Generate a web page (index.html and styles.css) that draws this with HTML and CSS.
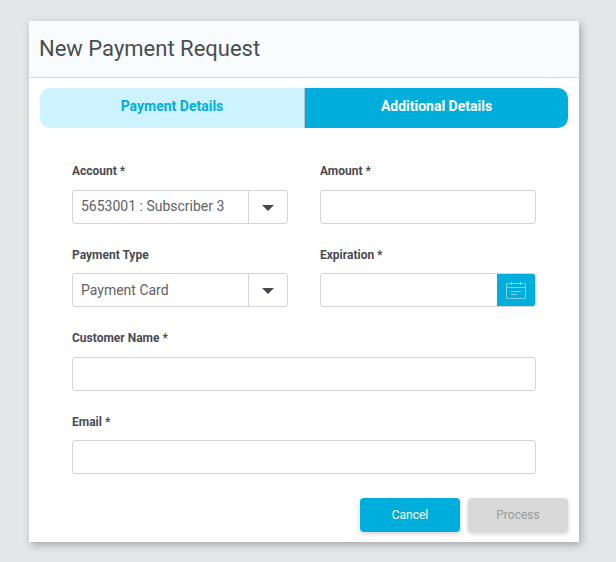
FILE: index.html
```html
<!DOCTYPE html>
<html lang="en">
<head>
    <meta charset="UTF-8">
    <title>New Payment Request</title>
    <link rel="stylesheet" href="styles.css">
</head>
<body>
    <div class="modal">
        <div class="modal-header">
            <h1>New Payment Request</h1>
        </div>
        <div class="tabs">
            <div class="tab tab-active">Payment Details</div>
            <div class="tab tab-next">Additional Details</div>
        </div>
        <form class="payment-form">
            <div class="field">
                <label>Account *</label>
                <div class="control">
                    <span class="control-value">5653001 : Subscriber 3</span>
                    <span class="select-arrow"><i class="caret"></i></span>
                </div>
            </div>
            <div class="field">
                <label>Amount *</label>
                <div class="control"></div>
            </div>
            <div class="field">
                <label>Payment Type</label>
                <div class="control">
                    <span class="control-value">Payment Card</span>
                    <span class="select-arrow"><i class="caret"></i></span>
                </div>
            </div>
            <div class="field">
                <label>Expiration *</label>
                <div class="control">
                    <span class="control-value"></span>
                    <span class="date-button">
                        <svg width="20" height="18" viewBox="0 0 20 18" fill="none" stroke="#7fd0ea" stroke-width="1">
                            <rect x="0.5" y="2.5" width="19" height="15" rx="0.5"/>
                            <path d="M0.5 6.5H19.5"/>
                            <path d="M5.5 0.5V4M14.5 0.5V4"/>
                            <path d="M5 10.5H15"/>
                            <path d="M5 13.5H11"/>
                        </svg>
                    </span>
                </div>
            </div>
            <div class="field field-wide">
                <label>Customer Name *</label>
                <div class="control"></div>
            </div>
            <div class="field field-wide">
                <label>Email *</label>
                <div class="control"></div>
            </div>
        </form>
        <div class="modal-footer">
            <button class="button button-primary" type="button">Cancel</button>
            <button class="button button-disabled" type="button" disabled>Process</button>
        </div>
    </div>
</body>
</html>
```

FILE: styles.css
```css
* {
    margin: 0;
    padding: 0;
    box-sizing: border-box;
    font-family: Roboto, 'Liberation Sans', sans-serif;
}

body {
    background: #e5e6e8;
    padding: 21px 37px 20px 29px;
    overflow: hidden;
}

.modal {
    width: 550px;
    height: 521px;
    background: white;
    box-shadow: 2px 3px 8px rgba(0, 0, 0, 0.28);
}

.modal-header {
    height: 57px;
    background: #f8fcff;
    border-bottom: 1px solid #d3d6da;
    padding: 14px 10px 0;
}

h1 {
    font-size: 22px;
    font-weight: 400;
    line-height: 27px;
    color: #4a4d50;
}

.tabs {
    display: flex;
    margin: 10px 11px 0;
    height: 40px;
}

.tab {
    display: flex;
    justify-content: center;
    align-items: center;
    padding-bottom: 4px;
    font-size: 14px;
    font-weight: 700;
}

.tab-active {
    width: 265px;
    background: #ccf3ff;
    color: #00aedb;
    border-right: 1px solid #b9c4c8;
    border-radius: 10px 0 0 10px;
}

.tab-next {
    flex: 1;
    background: #00aedb;
    color: white;
    border-radius: 0 10px 10px 0;
}

.payment-form {
    display: grid;
    grid-template-columns: 216px 216px;
    column-gap: 32px;
    row-gap: 22px;
    padding: 34.25px 43px 0;
}

.field-wide {
    grid-column: 1 / 3;
}

label {
    display: block;
    height: 27.5px;
    padding-top: 2px;
    font-size: 12px;
    font-weight: 700;
    line-height: 14px;
    color: #484c52;
}

.control {
    display: flex;
    height: 34px;
    background: white;
    border: 1px solid #d3d5d8;
    border-radius: 3px;
}

.control-value {
    flex: 1;
    padding: 0.5px 0 0 8px;
    font-size: 14px;
    line-height: 31px;
    color: #5f6266;
}

.select-arrow {
    width: 39px;
    display: flex;
    justify-content: center;
    align-items: center;
    border-left: 1px solid #d3d5d8;
}

.caret {
    margin-top: 2px;
    border-top: 6px solid #45494e;
    border-left: 6.5px solid transparent;
    border-right: 6.5px solid transparent;
}

.date-button {
    width: 38px;
    display: flex;
    justify-content: center;
    align-items: center;
    background: #00aedb;
    border-radius: 0 2px 2px 0;
}

.modal-footer {
    display: flex;
    justify-content: flex-end;
    gap: 8px;
    padding: 24px 11px 0 0;
}

.button {
    width: 100px;
    height: 34px;
    border: none;
    border-radius: 4px;
    font-size: 12px;
    box-shadow: 0 2px 4px rgba(0, 0, 0, 0.18);
}

.button-primary {
    background: #00aedb;
    color: white;
    cursor: pointer;
}

.button-disabled {
    background: #d9d9d9;
    color: #9a9a9a;
}
```
